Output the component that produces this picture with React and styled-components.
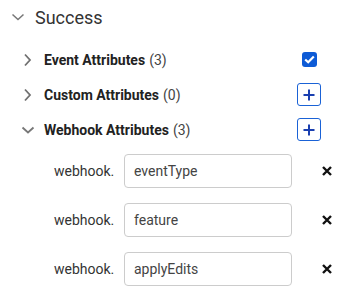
import React from "react";
import styled, { createGlobalStyle } from "styled-components";

const Global = createGlobalStyle`
  body {
    margin: 0;
    background: #fff;
    font-family: Roboto, "Liberation Sans", sans-serif;
  }
`;

const Page = styled.div`
  width: 341px;
`;

const Header = styled.div`
  height: 34px;
  display: flex;
  align-items: center;
  gap: 10px;
  padding-left: 11px;
  color: #333;
  font-size: 18px;
`;

const List = styled.div`
  padding-top: 8px;
`;

const GroupRow = styled.div`
  height: 35px;
  display: flex;
  align-items: center;
  padding-left: 21px;
  padding-right: 20px;
`;

const Chevron = styled.span`
  width: 14px;
  display: flex;
  justify-content: center;
  margin-right: 9px;
`;

const Title = styled.span`
  font-size: 14px;
  font-weight: 700;
  color: #222;
`;

const Count = styled.span`
  font-weight: 400;
  color: #444;
  margin-left: 4px;
`;

const Control = styled.div`
  margin-left: auto;
  width: 24px;
  display: flex;
  justify-content: center;
`;

const Check = styled.span`
  width: 15px;
  height: 15px;
  border-radius: 3px;
  background: #0d5bd6;
  display: flex;
  align-items: center;
  justify-content: center;
`;

const AddButton = styled.button`
  width: 24px;
  height: 23px;
  padding: 0;
  border: 1px solid #1a62d6;
  border-radius: 3px;
  background: #fff;
  display: flex;
  align-items: center;
  justify-content: center;
`;

const Items = styled.div`
  padding-top: 7px;
  display: flex;
  flex-direction: column;
  gap: 15px;
`;

const Item = styled.div`
  display: flex;
  align-items: center;
  padding-left: 54px;
`;

const Prefix = styled.span`
  width: 70px;
  font-size: 14px;
  color: #333;
`;

const Field = styled.input`
  box-sizing: border-box;
  width: 168px;
  height: 34px;
  border: 1px solid #ccc;
  border-radius: 4px;
  padding: 0 9px;
  font-family: inherit;
  font-size: 14px;
  color: #444;
  outline: none;
`;

const Remove = styled.button`
  margin-left: 24px;
  width: 22px;
  height: 22px;
  padding: 0;
  border: none;
  background: none;
  display: flex;
  align-items: center;
  justify-content: center;
`;

const ChevronIcon = ({ open, size = 14, weight = 1.8 }) => (
  <svg width={size} height={size} viewBox="0 0 14 14" fill="none">
    {open ? (
      <path d="M1.5 4.5 L7 9.5 L12.5 4.5" stroke="#777" strokeWidth={weight} />
    ) : (
      <path d="M4 1.5 L9 7 L4 12.5" stroke="#707070" strokeWidth={weight} />
    )}
  </svg>
);

const PlusIcon = () => (
  <svg width="12" height="12" viewBox="0 0 12 12">
    <path d="M6 0.5 V11.5 M0.5 6 H11.5" stroke="#1a3fb0" strokeWidth="2" />
  </svg>
);

const XIcon = () => (
  <svg width="10" height="10" viewBox="0 0 10 10">
    <path d="M1 1 L9 9 M9 1 L1 9" stroke="#111" strokeWidth="2.4" />
  </svg>
);

const groups = [
  { name: "Event Attributes", count: 3, open: false, control: "check" },
  { name: "Custom Attributes", count: 0, open: false, control: "add" },
  { name: "Webhook Attributes", count: 3, open: true, control: "add" },
];

const webhookFields = ["eventType", "feature", "applyEdits"];

export default function App() {
  return (
    <Page>
      <Global />
      <Header>
        <ChevronIcon open size={14} weight={1.5} />
        <span>Success</span>
      </Header>
      <List>
        {groups.map((g) => (
          <React.Fragment key={g.name}>
            <GroupRow>
              <Chevron>
                <ChevronIcon open={g.open} />
              </Chevron>
              <Title>
                {g.name}
                <Count>({g.count})</Count>
              </Title>
              <Control>
                {g.control === "check" ? (
                  <Check>
                    <svg width="11" height="9" viewBox="0 0 11 9">
                      <path d="M1.2 4.5 L4.2 7.3 L9.8 1.5" stroke="#fff" strokeWidth="2.2" fill="none" />
                    </svg>
                  </Check>
                ) : (
                  <AddButton>
                    <PlusIcon />
                  </AddButton>
                )}
              </Control>
            </GroupRow>
            {g.open && (
              <Items>
                {webhookFields.map((f) => (
                  <Item key={f}>
                    <Prefix>webhook.</Prefix>
                    <Field defaultValue={f} />
                    <Remove>
                      <XIcon />
                    </Remove>
                  </Item>
                ))}
              </Items>
            )}
          </React.Fragment>
        ))}
      </List>
    </Page>
  );
}
